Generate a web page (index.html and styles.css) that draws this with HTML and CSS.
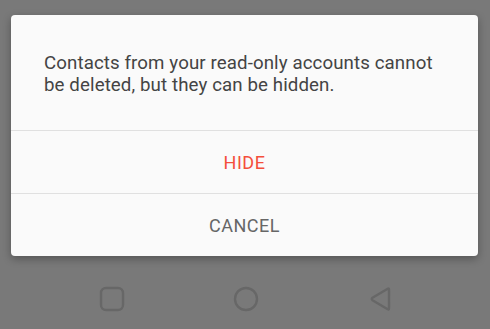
FILE: index.html
```html
<!DOCTYPE html>
<html>
<head>
<meta charset="utf-8">
<link rel="stylesheet" href="styles.css">
</head>
<body>
<div class="screen">
  <div class="dialog">
    <p class="message">Contacts from your read-only accounts cannot be deleted, but they can be hidden.</p>
    <div class="action hide">HIDE</div>
    <div class="action cancel">CANCEL</div>
  </div>
  <div class="navbar">
    <svg class="nav-icon" width="26" height="26" viewBox="0 0 26 26"><rect x="2" y="2" width="22" height="22" rx="5" fill="none" stroke="#676767" stroke-width="2.4"/></svg>
    <svg class="nav-icon" width="26" height="26" viewBox="0 0 26 26"><circle cx="13" cy="13" r="11" fill="none" stroke="#676767" stroke-width="2.4"/></svg>
    <svg class="nav-icon" width="26" height="26" viewBox="0 0 26 26"><path d="M22 3.5 L22 22.5 Q22 24 20.7 23.2 L5.5 14.2 Q4 13 5.5 11.8 L20.7 2.8 Q22 2 22 3.5 Z" fill="none" stroke="#676767" stroke-width="2.4" stroke-linejoin="round"/></svg>
  </div>
</div>
</body>
</html>
```
FILE: styles.css
```css
html, body {
  margin: 0;
  padding: 0;
  background: #797979;
}
.screen {
  width: 490px;
  height: 329px;
  display: flex;
  flex-direction: column;
  font-family: Roboto, "Noto Sans", sans-serif;
}
.dialog {
  margin: 15px 12px 0 11px;
  background: #fafafa;
  border-radius: 4px;
  box-shadow: 0 3px 8px rgba(0,0,0,0.3);
  overflow: hidden;
}
.message {
  margin: 0;
  padding: 37px 34px 34px 33px;
  font-size: 18.7px;
  line-height: 22px;
  letter-spacing: 0.1px;
  color: #444;
}
.action {
  height: 62px;
  border-top: 1px solid #e0e0e0;
  display: flex;
  align-items: center;
  justify-content: center;
  font-size: 18px;
  letter-spacing: 0.5px;
}
.hide {
  color: #f44f3c;
}
.cancel {
  color: #666;
}
.navbar {
  margin-top: 30px;
  display: flex;
  justify-content: center;
  gap: 108px;
  padding-left: 2px;
}
.nav-icon {
  display: block;
}
```
